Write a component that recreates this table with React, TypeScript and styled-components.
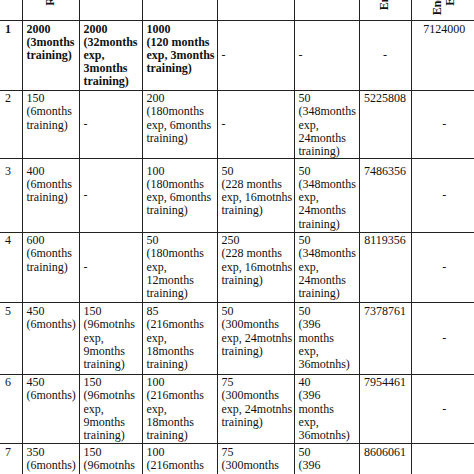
import styled, { createGlobalStyle } from "styled-components"

const GlobalStyle = createGlobalStyle`
	html, body {
		margin: 0;
		padding: 0;
		background: #ffffff;
		overflow: hidden;
		width: 474px;
		height: 474px;
	}
`

const widths = [22, 57, 63, 75, 77, 65, 52, 66]

const Page = styled.div`
	width: 474px;
	height: 474px;
	overflow: hidden;
	font-family: "Liberation Serif", "Times New Roman", serif;
	font-size: 12px;
	line-height: 13.2px;
	color: #111111;
`

const Table = styled.table`
	border-collapse: collapse;
	table-layout: fixed;
	width: 477px;
`

const Th = styled.th`
	height: 20px;
	padding: 0;
	border-right: 1px solid #222222;
	border-bottom: 1px solid #222222;
	vertical-align: bottom;

	&:last-child {
		border-right: none;
	}
`

const HeadClip = styled.div`
	height: 20px;
	overflow: hidden;
	display: flex;
	justify-content: center;
	align-items: flex-end;
`

const VLabel = styled.span<{ $drop: number }>`
	writing-mode: vertical-rl;
	transform: rotate(180deg);
	font-weight: bold;
	white-space: nowrap;
	line-height: 13.5px;
	margin-bottom: ${(p) => p.$drop}px;
`

const Tr = styled.tr<{ $h: number }>`
	height: ${(p) => p.$h}px;
`

const Td = styled.td<{
	$mid?: boolean
	$center?: boolean
	$bold?: boolean
	$first?: boolean
	$top: number
}>`
	padding: ${(p) => `${p.$top}px ${p.$first ? "0 0 5px" : "4px 0 4px"}`};
	border-right: 1px solid #222222;
	border-bottom: 1px solid #222222;
	vertical-align: ${(p) => (p.$mid ? "middle" : "top")};
	text-align: ${(p) => (p.$center ? "center" : "left")};
	font-weight: ${(p) => (p.$bold ? "bold" : "normal")};
	overflow: hidden;

	&:last-child {
		border-right: none;
	}
`

const Line = styled.div`
	white-space: nowrap;
`

type Row = { n: string; h: number; top: number; bold?: boolean; cells: string[][] }

const D = ["-"]
const exp348 = ["50", "(348months", "exp,", "24months", "training)"]

const rows: Row[] = [
	{
		n: "1",
		h: 70,
		top: 1.5,
		bold: true,
		cells: [
			["2000", "(3months", "training)"],
			["2000", "(32months", "exp,", "3months", "training)"],
			["1000", "(120 months", "exp, 3months", "training)"],
			D,
			D,
			D,
			["7124000"],
		],
	},
	{
		n: "2",
		h: 67,
		top: 1.2,
		cells: [
			["150", "(6months", "training)"],
			D,
			["200", "(180months", "exp, 6months", "training)"],
			D,
			exp348,
			["5225808"],
			D,
		],
	},
	{
		n: "3",
		h: 74,
		top: 5.5,
		cells: [
			["400", "(6months", "training)"],
			D,
			["100", "(180months", "exp, 6months", "training)"],
			["50", "(228 months", "exp, 16motnhs", "training)"],
			exp348,
			["7486356"],
			D,
		],
	},
	{
		n: "4",
		h: 70,
		top: 1,
		cells: [
			["600", "(6months", "training)"],
			D,
			["50", "(180months", "exp,", "12months", "training)"],
			["250", "(228 months", "exp, 16motnhs", "training)"],
			exp348,
			["8119356"],
			D,
		],
	},
	{
		n: "5",
		h: 72,
		top: 2,
		cells: [
			["450", "(6months)"],
			["150", "(96motnhs", "exp,", "9months", "training)"],
			["85", "(216months", "exp,", "18months", "training)"],
			["50", "(300months", "exp, 24motnhs", "training)"],
			["50", "(396", "months", "exp,", "36motnhs)"],
			["7378761"],
			D,
		],
	},
	{
		n: "6",
		h: 69,
		top: 1,
		cells: [
			["450", "(6months)"],
			["150", "(96motnhs", "exp,", "9months", "training)"],
			["100", "(216months", "exp,", "18months", "training)"],
			["75", "(300months", "exp, 24motnhs", "training)"],
			["40", "(396", "months", "exp,", "36motnhs)"],
			["7954461"],
			D,
		],
	},
	{
		n: "7",
		h: 72,
		top: 2,
		cells: [
			["350", "(6months)"],
			["150", "(96motnhs", "exp,", "9months", "training)"],
			["100", "(216months", "exp,", "18months", "training)"],
			["75", "(300months", "exp, 24motnhs", "training)"],
			["50", "(396", "months", "exp,", "36motnhs)"],
			["8606061"],
			D,
		],
	},
]

export default function App() {
	return (
		<Page>
			<GlobalStyle />
			<Table>
				<colgroup>
					{widths.map((w, i) => (
						<col key={i} style={{ width: w }} />
					))}
				</colgroup>
				<thead>
					<tr>
						<Th />
						<Th>
							<HeadClip>
								<VLabel $drop={14}>Recruitment</VLabel>
							</HeadClip>
						</Th>
						<Th />
						<Th />
						<Th />
						<Th />
						<Th>
							<HeadClip>
								<VLabel $drop={10}>Energy</VLabel>
							</HeadClip>
						</Th>
						<Th>
							<HeadClip>
								<VLabel $drop={5}>Energy</VLabel>
								<VLabel $drop={14}>Expense</VLabel>
							</HeadClip>
						</Th>
					</tr>
				</thead>
				<tbody>
					{rows.map((row) => (
						<Tr key={row.n} $h={row.h}>
							<Td $first $top={row.top} $bold={row.bold}>
								{row.n}
							</Td>
							{row.cells.map((lines, i) => {
								const dash = lines.length === 1 && lines[0] === "-"
								return (
									<Td
										key={i}
										$top={dash ? 0 : row.top}
										$mid={dash}
										$center={i >= 5}
										$bold={row.bold && i < 3}
									>
										{lines.map((l, j) => (
											<Line key={j}>{l}</Line>
										))}
									</Td>
								)
							})}
						</Tr>
					))}
				</tbody>
			</Table>
		</Page>
	)
}
